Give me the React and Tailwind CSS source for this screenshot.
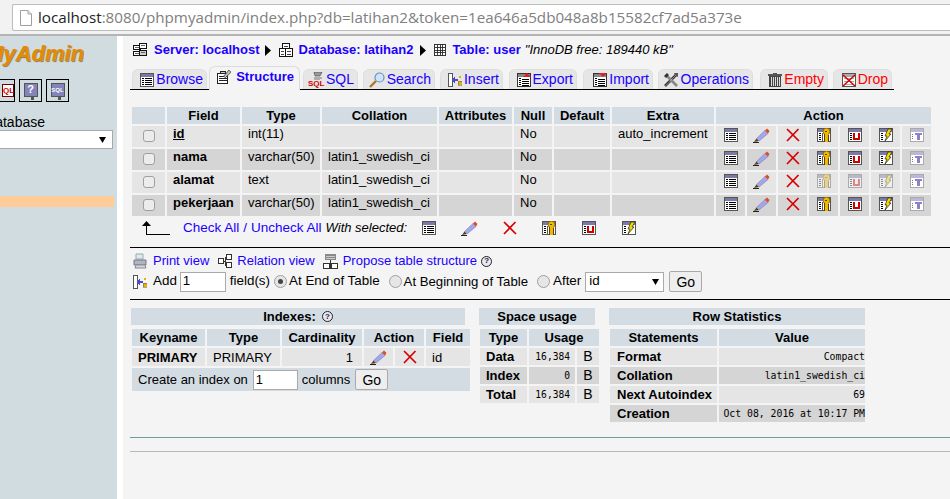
import React from 'react';

const link = 'text-[#1a00ff]';
const headCell = 'bg-[#d3dce3] font-bold text-center p-0 h-[17px] leading-[17px]';

const Svg = ({ children, size = 14, className = '' }) => (
  <svg width={size} height={size} viewBox="0 0 14 14" shapeRendering="crispEdges" className={`inline-block align-top shrink-0 ${className}`}>
    {children}
  </svg>
);

const Frame = ({ head = '#7a7aa8', border = '#555' }) => (
  <>
    <rect x="0.5" y="0.5" width="13" height="13" fill="#fff" stroke={border} />
    <rect x="1" y="1" width="12" height="3" fill={head} />
  </>
);

const Dots = () => (
  <>
    <rect x="2" y="5" width="2" height="1" fill="#000" />
    <rect x="2" y="7" width="2" height="1" fill="#000" />
    <rect x="2" y="9" width="2" height="1" fill="#000" />
    <rect x="2" y="11" width="2" height="1" fill="#000" />
  </>
);

const BrowseIcon = () => (
  <Svg>
    <Frame />
    <Dots />
    <rect x="5" y="5" width="7" height="1" fill="#000" />
    <rect x="5" y="7" width="7" height="1" fill="#000" />
    <rect x="5" y="9" width="7" height="1" fill="#000" />
    <rect x="5" y="11" width="7" height="1" fill="#000" />
  </Svg>
);

const PencilIcon = () => (
  <svg width="17" height="15" viewBox="0 0 17 15" className="inline-block align-top shrink-0">
    <path d="M0 14.5 H6" stroke="#222" strokeWidth="1" />
    <path d="M1 14 L3.5 10.5 L6 13 Z" fill="#5a4010" />
    <path d="M3.5 10.5 L12 2.5 L15 5.5 L6 13 Z" fill="#a4a8ea" stroke="#6a6a9a" strokeWidth="0.5" />
    <path d="M12 2.5 L14 0.5 L16.5 3 L15 5.5 Z" fill="#e04a20" />
  </svg>
);

const DropIcon = () => (
  <svg width="14" height="14" viewBox="0 0 14 14" className="inline-block align-top shrink-0">
    <path d="M1 1 L13 13 M12.5 1 L1 13" stroke="#d80000" strokeWidth="1.7" />
  </svg>
);

const KeyIcon = ({ dim }) => (
  <Svg className={dim ? 'opacity-40' : ''}>
    <Frame />
    <Dots />
    <rect x="5" y="5" width="1" height="8" fill="#555" />
    <circle cx="9.5" cy="3.5" r="3.4" fill="#f0b800" stroke="#5a4300" strokeWidth="0.6" shapeRendering="auto" />
    <rect x="8" y="3" width="2" height="1" fill="#5a4300" />
    <rect x="8" y="6" width="3" height="8" fill="#f0b800" />
    <rect x="7" y="6" width="1" height="8" fill="#5a4300" />
    <rect x="11" y="7" width="1" height="7" fill="#5a4300" />
  </Svg>
);

const UniqueIcon = ({ dim }) => (
  <Svg className={dim ? 'opacity-40' : ''}>
    <Frame />
    <Dots />
    <path d="M5 5 H7 V10 H10 V5 H12 V12 H5 Z" fill="#d00000" />
  </Svg>
);

const BoltIcon = ({ dim }) => (
  <Svg className={dim ? 'opacity-40' : ''}>
    <Frame />
    <Dots />
    <path d="M9 1 H13 L10 6 H12 L6 13 L8 8 H6 Z" fill="#f5d800" stroke="#222" strokeWidth="0.7" shapeRendering="auto" />
  </Svg>
);

const TextIcon = () => (
  <Svg>
    <rect x="0.5" y="0.5" width="13" height="13" fill="#fff" stroke="#aaa" />
    <rect x="1" y="1" width="12" height="3" fill="#b8b8d8" />
    <path d="M2 6h1v1H2zM2 8h1v1H2zM2 10h1v1H2z" fill="#777" />
    <path d="M5 5 H12 V7 H10 V12 H7 V7 H5 Z" fill="#9080c8" />
  </Svg>
);

const StructureIcon = () => (
  <Svg size={15}>
    <path d="M1 4 H11 V14 H1 Z" fill="#fff" stroke="#222" />
    <path d="M3 7h7M3 9h7M3 11h7" stroke="#222" />
    <path d="M4 2 H9 V4 H4 Z" fill="#ccc" stroke="#222" />
    <path d="M7 7 L12 1 L14 3 L9 8 Z" fill="#bbb" stroke="#222" strokeWidth="0.6" shapeRendering="auto" />
  </Svg>
);

const SqlIcon = () => (
  <span className="relative inline-block w-[16px] h-[15px] shrink-0">
    <svg width="16" height="9" viewBox="0 0 16 9" className="absolute right-0 top-0">
      <path d="M6 0 H14 L12 4 H7 Z" fill="#999" stroke="#444" strokeWidth="0.6" />
      <path d="M7 5v3M9 5v3M11 5v3M13 5v2" stroke="#777" />
    </svg>
    <span className="absolute left-0 bottom-[-1px] text-[8px] leading-[8px] font-bold text-[#d00000]">SQL</span>
  </span>
);

const SearchIcon = () => (
  <svg width="16" height="16" viewBox="0 0 16 16" className="inline-block shrink-0">
    <path d="M1 15 L7 9" stroke="#b07820" strokeWidth="2.4" />
    <circle cx="10.5" cy="5.5" r="4.5" fill="#cfe4fb" stroke="#6a90c0" strokeWidth="1.2" />
  </svg>
);

const InsertIcon = () => (
  <Svg>
    <rect x="0.5" y="0.5" width="4" height="13" fill="#fff" stroke="#555" />
    <path d="M3 7 L7 4 V6 H10 V8 H7 V10 Z" fill="#4a4ad0" />
    <rect x="11" y="3" width="2" height="2" fill="#e8b000" />
    <rect x="10" y="8" width="4" height="4" fill="#e8b000" stroke="#555" strokeWidth="0.5" />
  </Svg>
);

const ExportIcon = () => (
  <Svg>
    <Frame head="#888" border="#333" />
    <Dots />
    <path d="M5 6h7M5 8h7M5 10h7M5 12h7" stroke="#000" />
    <path d="M10 0 L14 4 H6 Z" fill="#e02020" shapeRendering="auto" />
  </Svg>
);

const ImportIcon = () => (
  <Svg>
    <Frame head="#888" border="#333" />
    <Dots />
    <path d="M5 6h7M5 8h7M5 10h7M5 12h7" stroke="#000" />
    <path d="M6 0 H14 L10 4 Z" fill="#e02020" shapeRendering="auto" />
  </Svg>
);

const OperationsIcon = () => (
  <svg width="16" height="16" viewBox="0 0 16 16" className="inline-block shrink-0">
    <path d="M2 14 L13 3" stroke="#333" strokeWidth="2.6" />
    <path d="M3 3 L14 14" stroke="#888" strokeWidth="2.6" />
    <path d="M1 4 L4 1 L6 3 L3 6 Z" fill="#333" />
    <path d="M11 1 H15 V5 L13 4 L12 3 Z" fill="#555" />
    <path d="M2.5 14 L13 3" stroke="#ccc" strokeWidth="0.6" />
  </svg>
);

const EmptyIcon = () => (
  <Svg>
    <rect x="0" y="1" width="14" height="2" fill="#555" />
    <rect x="5" y="0" width="4" height="1" fill="#555" />
    <rect x="1" y="3" width="12" height="11" fill="#444" />
    <path d="M3 4v9M5 4v9M7 4v9M9 4v9M11 4v9" stroke="#ddd" />
  </Svg>
);

const DropTabIcon = () => (
  <Svg>
    <Frame head="#aaa" border="#555" />
    <path d="M2 5h10M2 8h10M2 11h10" stroke="#aaa" />
    <path d="M1 2 L13 13 M13 2 L1 13" stroke="#d80000" strokeWidth="1.6" shapeRendering="auto" />
  </Svg>
);

const ServerIcon = () => (
  <Svg>
    <rect x="0.5" y="2.5" width="7" height="4" fill="#fff" stroke="#111" />
    <rect x="6.5" y="0.5" width="7" height="5" fill="#fff" stroke="#111" />
    <rect x="0.5" y="8.5" width="7" height="4" fill="#fff" stroke="#111" />
    <rect x="6.5" y="7.5" width="7" height="5" fill="#ccc" stroke="#111" />
    <path d="M2 4h4M2 10h4M8 2h4M8 9h4" stroke="#666" />
  </Svg>
);

const DatabaseIcon = () => (
  <Svg>
    <rect x="3.5" y="0.5" width="7" height="5" fill="#fff" stroke="#111" />
    <rect x="0.5" y="5.5" width="6" height="8" fill="#fff" stroke="#111" />
    <rect x="6.5" y="5.5" width="7" height="8" fill="#fff" stroke="#111" />
    <path d="M2 8h3M2 11h3M8 8h4M8 11h4M5 3h4" stroke="#444" />
  </Svg>
);

const TableSmallIcon = () => (
  <Svg size={12}>
    <rect x="0.5" y="0.5" width="13" height="13" fill="#fff" stroke="#111" />
    <path d="M1 4h12M1 7h12M1 10h12M4 1v12M7 1v12M10 1v12" stroke="#222" />
  </Svg>
);

const Crumb = ({ className = '' }) => (
  <svg width="8" height="11" viewBox="0 0 8 11" className={`shrink-0 ${className}`}>
    <path d="M1 0 L7 5.5 L1 11 Z" fill="#000" />
  </svg>
);

const DownArrow = () => (
  <svg width="7" height="6" viewBox="0 0 7 6" className="shrink-0">
    <path d="M0 0 H7 L3.5 6 Z" fill="#000" />
  </svg>
);

const HelpIcon = () => (
  <span className="inline-flex items-center justify-center w-[11px] h-[11px] rounded-full border border-[#222] bg-[#e8e8f4] text-[8px] leading-none font-bold text-[#222]">?</span>
);

const PrintIcon = () => (
  <svg width="15" height="16" viewBox="0 0 15 16" className="inline-block shrink-0">
    <path d="M3 1 H10 V6 H3 Z" fill="#dfe8f5" stroke="#9aa" />
    <path d="M1 7 H13 V12 H1 Z" fill="#aeb6c0" stroke="#778" />
    <path d="M3 12 H12 L13 15 H2 Z" fill="#d8d8d8" stroke="#889" />
  </svg>
);

const RelationIcon = () => (
  <Svg>
    <rect x="8.5" y="0.5" width="5" height="5" fill="#fff" stroke="#333" />
    <rect x="0.5" y="4.5" width="5" height="5" fill="#fff" stroke="#333" />
    <rect x="8.5" y="8.5" width="5" height="5" fill="#fff" stroke="#333" />
    <path d="M6 7h2M7 3v9M7 3h1M7 11h1" stroke="#333" />
  </Svg>
);

const ProposeIcon = () => (
  <Svg size={15}>
    <rect x="2" y="0" width="10" height="6" fill="#888" />
    <path d="M3 2h8M3 4h8" stroke="#ccc" />
    <rect x="0.5" y="8.5" width="6" height="5" fill="#fff" stroke="#333" />
    <rect x="7.5" y="8.5" width="6" height="5" fill="#fff" stroke="#333" />
    <path d="M7 6v2" stroke="#333" />
  </Svg>
);

const ArrowUpRight = () => (
  <svg width="29" height="15" viewBox="0 0 29 15" className="shrink-0">
    <path d="M4 13.5 H28" stroke="#000" />
    <path d="M4.5 13.5 V4" stroke="#000" />
    <path d="M0 5 L4.5 0 L9 5 Z" fill="#000" />
  </svg>
);

const Checkbox = () => (
  <input type="checkbox" className="appearance-none block mx-auto mt-[4px] w-[12px] h-[12px] rounded-[3px] border border-[#a0a0a0] bg-[#ececec]" />
);

const Radio = ({ checked }) => (
  <span className="inline-flex items-center justify-center w-[13px] h-[13px] rounded-full border border-[#a0a0a0] bg-[#e6e6e6] shrink-0">
    {checked && <span className="w-[5px] h-[5px] rounded-full bg-[#444]" />}
  </span>
);

const GoButton = () => (
  <button className="h-[21px] w-[33px] bg-[#eeeeee] border border-[#aaa] rounded-[2px] text-[14px] text-black leading-none">Go</button>
);

const Bubble = ({ children, className = '' }) => (
  <span className="relative w-[14px] h-[14px] mb-[2px] bg-[#8484b8] border border-[#555] flex items-center justify-center">
    <span className={`text-white font-bold leading-none ${className}`}>{children}</span>
    <span className="absolute left-[6px] top-[12px] w-[3px] h-[4px] bg-[#555]" />
  </span>
);

const tabs = [
  { label: 'Browse', icon: <BrowseIcon />, w: 'w-[75px]', ml: 'ml-[2px]' },
  { label: 'Structure', icon: <StructureIcon />, w: 'w-[91px]', ml: 'ml-[2px]', active: true },
  { label: 'SQL', icon: <SqlIcon />, w: 'w-[55px]', ml: 'ml-[3px]' },
  { label: 'Search', icon: <SearchIcon />, w: 'w-[72px]', ml: 'ml-[5px]' },
  { label: 'Insert', icon: <InsertIcon />, w: 'w-[63px]', ml: 'ml-[5px]' },
  { label: 'Export', icon: <ExportIcon />, w: 'w-[68px]', ml: 'ml-[6px]' },
  { label: 'Import', icon: <ImportIcon />, w: 'w-[70px]', ml: 'ml-[6px]' },
  { label: 'Operations', icon: <OperationsIcon />, w: 'w-[95px]', ml: 'ml-[5px]' },
  { label: 'Empty', icon: <EmptyIcon />, w: 'w-[68px]', ml: 'ml-[7px]', red: true },
  { label: 'Drop', icon: <DropTabIcon />, w: 'w-[59px]', ml: 'ml-[5px]', red: true },
];

const fields = [
  { name: 'id', type: 'int(11)', collation: '', extra: 'auto_increment', primary: true },
  { name: 'nama', type: 'varchar(50)', collation: 'latin1_swedish_ci', extra: '' },
  { name: 'alamat', type: 'text', collation: 'latin1_swedish_ci', extra: '', dimmed: true },
  { name: 'pekerjaan', type: 'varchar(50)', collation: 'latin1_swedish_ci', extra: '' },
];

const spaceRows = [
  ['Data', '16,384'],
  ['Index', '0'],
  ['Total', '16,384'],
];

const statRows = [
  ['Format', 'Compact'],
  ['Collation', 'latin1_swedish_ci'],
  ['Next Autoindex', '69'],
  ['Creation', 'Oct 08, 2016 at 10:17 PM'],
];

const mono = "font-['DejaVu_Sans_Mono','Liberation_Mono',monospace]";

const App = () => {
  return (
    <div className="w-[950px] h-[499px] overflow-hidden flex flex-col bg-white font-['Liberation_Sans',Arial,sans-serif] text-[13px] text-black">
      {/* address bar */}
      <div className="h-[36px] shrink-0 bg-[#f2f2f2] border-b-2 border-[#b4b4b4] pl-[12px] pt-[4px]">
        <div className="h-[27px] bg-white border border-[#bdbdbd] border-r-0 rounded-l-[2px] flex items-center pl-[6px] gap-[5px]">
          <svg width="14" height="16" viewBox="0 0 14 16" className="shrink-0">
            <path d="M1.5 0.5 H9 L12.5 4 V15.5 H1.5 Z" fill="#fff" stroke="#a0a0a0" />
            <path d="M9 0.5 V4 H12.5" fill="#e8e8e8" stroke="#a0a0a0" />
          </svg>
          <span className="font-['Open_Sans','Noto_Sans',sans-serif] text-[15.2px] leading-[22px] mb-[1px] whitespace-nowrap text-[#808080]">
            <span className="text-[#222]">localhost</span>:8080/phpmyadmin/index.php?db=latihan2&amp;token=1ea646a5db048a8b15582cf7ad5a373e
          </span>
        </div>
      </div>

      <div className="flex-1 flex min-h-0">
        {/* sidebar, clipped on the left */}
        <aside className="w-[117px] shrink-0 bg-[#d0dce0] flex flex-col overflow-hidden">
          <div className="w-[84px] h-[32px] mt-[2px] flex justify-end overflow-hidden">
            <span className="font-bold italic text-[22px] leading-[32px] text-[#e88a00] whitespace-nowrap [text-shadow:1px_1px_1px_#8a7a50]">phpMyAdmin</span>
          </div>
          <div className="w-[69px] mt-[9px] flex justify-end gap-[4px]">
            <div className="w-[23px] h-[23px] border border-black flex items-center justify-end shrink-0 overflow-hidden">
              <span className="w-[12px] h-[13px] bg-white border border-[#700] text-[8px] leading-[12px] font-bold text-[#d00000]">QL</span>
            </div>
            <div className="w-[23px] h-[23px] border border-black flex items-center justify-center shrink-0">
              <Bubble className="text-[11px]">?</Bubble>
            </div>
            <div className="w-[23px] h-[23px] border border-black flex items-center justify-center shrink-0">
              <Bubble className="text-[6px]">SQL</Bubble>
            </div>
          </div>
          <div className="w-[45px] h-[16px] mt-[12px] flex justify-end overflow-hidden">
            <span className="text-[14px] leading-[16px] whitespace-nowrap">Database</span>
          </div>
          <div className="w-[113px] h-[19px] bg-white border border-[#a8a8a8] border-l-0 flex items-center justify-end pr-[6px]">
            <DownArrow />
          </div>
          <div className="w-[114px] h-[11px] mt-[47px] bg-[#ffcc99]" />
        </aside>
        <div className="w-[6px] shrink-0 bg-white" />

        <main className="flex-1 bg-[#f4f4f4] pl-[7px] min-w-0 overflow-hidden">
          {/* breadcrumb */}
          <div className="flex items-center h-[16px] mt-[6px] ml-[3px] font-bold whitespace-nowrap">
            <ServerIcon />
            <span className={`${link} ml-[7px]`}>Server: localhost</span>
            <Crumb className="ml-[4px] mr-[7px]" />
            <DatabaseIcon />
            <span className={`${link} ml-[6px]`}>Database: latihan2</span>
            <Crumb className="ml-[6px] mr-[7px]" />
            <TableSmallIcon />
            <span className={`${link} ml-[6px]`}>Table: user</span>
            <span className="font-normal italic ml-[4px]">"InnoDB free: 189440 kB"</span>
          </div>

          {/* tabs */}
          <div className="flex items-end mt-[8px] h-[24px] w-[764px] border-b border-black text-[14px]">
            {tabs.map((t) => (
              <div
                key={t.label}
                className={`${t.w} ${t.ml} shrink-0 flex items-center justify-end whitespace-nowrap border border-b-0 rounded-t-[6px] ${
                  t.active
                    ? 'h-[24px] mb-[-1px] pb-[4px] pr-[5px] bg-[#f4f4f4] border-[#dcdcdc] font-bold text-[13px] gap-[5px]'
                    : 'h-[20px] pr-[3px] gap-[2px] bg-[#e6e6e6] border-[#dedede]'
                } ${t.red ? 'text-[#ff0000]' : link}`}
              >
                {t.icon}
                <span>{t.label}</span>
              </div>
            ))}
          </div>

          {/* structure table */}
          <table className="table-fixed border-separate border-spacing-[2px] mt-[15px] w-[803px]">
            <colgroup>
              <col className="w-[33px]" />
              <col className="w-[73px]" />
              <col className="w-[78px]" />
              <col className="w-[115px]" />
              <col className="w-[73px]" />
              <col className="w-[38px]" />
              <col className="w-[56px]" />
              <col className="w-[102px]" />
              {[0, 1, 2, 3, 4, 5, 6].map((i) => (
                <col key={i} className="w-[29px]" />
              ))}
            </colgroup>
            <thead>
              <tr>
                <th className={headCell} />
                <th className={headCell}>Field</th>
                <th className={headCell}>Type</th>
                <th className={headCell}>Collation</th>
                <th className={headCell}>Attributes</th>
                <th className={headCell}>Null</th>
                <th className={headCell}>Default</th>
                <th className={headCell}>Extra</th>
                <th className={headCell} colSpan={7}>Action</th>
              </tr>
            </thead>
            <tbody>
              {fields.map((f, i) => {
                const bg = i % 2 === 0 ? 'bg-[#e5e5e5]' : 'bg-[#d5d5d5]';
                const cell = `${bg} h-[21px] p-0 pl-[6px] align-top leading-[16px] whitespace-nowrap`;
                const icon = `${bg} h-[21px] p-0 pt-[2px] text-center align-top leading-none`;
                return (
                  <tr key={f.name}>
                    <td className={`${bg} p-0 align-top`}><Checkbox /></td>
                    <td className={`${cell} font-bold`}>
                      <span className={f.primary ? 'underline' : ''}>{f.name}</span>
                    </td>
                    <td className={cell}>{f.type}</td>
                    <td className={cell}>{f.collation}</td>
                    <td className={cell} />
                    <td className={cell}>No</td>
                    <td className={cell} />
                    <td className={cell}>{f.extra}</td>
                    <td className={icon}><BrowseIcon /></td>
                    <td className={icon}><PencilIcon /></td>
                    <td className={icon}><DropIcon /></td>
                    <td className={icon}><KeyIcon dim={f.dimmed} /></td>
                    <td className={icon}><UniqueIcon dim={f.dimmed} /></td>
                    <td className={icon}><BoltIcon dim={f.dimmed} /></td>
                    <td className={icon}><TextIcon /></td>
                  </tr>
                );
              })}
            </tbody>
          </table>

          {/* with selected */}
          <div className="flex items-center h-[20px] ml-[12px] text-[13.5px] whitespace-nowrap">
            <ArrowUpRight />
            <span className={`${link} ml-[12px]`}>Check All</span>
            <span className={`${link} mx-[4px]`}>/</span>
            <span className={link}>Uncheck All</span>
            <span className="italic ml-[4px] text-[13px]">With selected:</span>
            <span className="ml-[15px] flex items-center gap-[25px]">
              <BrowseIcon />
              <PencilIcon />
              <DropIcon />
              <KeyIcon />
              <span className="ml-[1px] flex"><UniqueIcon /></span>
              <span className="ml-[1px] flex"><BoltIcon /></span>
            </span>
          </div>

          {/* extra actions */}
          <div className="mt-[9px] border-t border-b border-black h-[53px] whitespace-nowrap">
            <div className="flex items-center h-[16px] mt-[5px] ml-[3px]">
              <PrintIcon />
              <span className={`${link} ml-[5px]`}>Print view</span>
              <span className="ml-[9px] flex"><RelationIcon /></span>
              <span className={`${link} ml-[5px]`}>Relation view</span>
              <span className="ml-[8px] flex"><ProposeIcon /></span>
              <span className={`${link} ml-[5px]`}>Propose table structure</span>
              <span className="ml-[4px] flex"><HelpIcon /></span>
            </div>
            <div className="flex items-center h-[21px] mt-[2px] ml-[3px] text-[13.4px]">
              <InsertIcon />
              <span className="ml-[6px]">Add</span>
              <input readOnly value="1" className="ml-[3px] w-[46px] h-[20px] bg-white border border-[#aaa] pl-[2px]" />
              <span className="ml-[4px]">field(s)</span>
              <span className="ml-[4px] flex"><Radio checked /></span>
              <span className="ml-[2px]">At End of Table</span>
              <span className="ml-[9px] flex"><Radio /></span>
              <span className="ml-[2px] text-[13.2px]">At Beginning of Table</span>
              <span className="ml-[9px] flex"><Radio /></span>
              <span className="ml-[3px]">After</span>
              <div className="ml-[4px] w-[79px] h-[20px] bg-white border border-[#aaa] flex items-center justify-between pl-[3px] pr-[4px]">
                <span>id</span>
                <DownArrow />
              </div>
              <span className="ml-[5px] flex"><GoButton /></span>
            </div>
          </div>

          {/* bottom tables */}
          <div className="flex items-start mt-[8px] leading-[17px]">
            <div className="w-[349px] shrink-0">
              <div className="ml-[1px] w-[334px] h-[17px] bg-[#d3dce3] font-bold flex items-center justify-center gap-[6px]">
                Indexes: <HelpIcon />
              </div>
              <table className="table-fixed border-separate border-spacing-[2px] w-[342px] mt-[2px]">
                <colgroup>
                  <col className="w-[73px]" />
                  <col className="w-[73px]" />
                  <col className="w-[80px]" />
                  <col className="w-[29px]" />
                  <col className="w-[29px]" />
                  <col className="w-[44px]" />
                </colgroup>
                <thead>
                  <tr>
                    <th className={headCell}>Keyname</th>
                    <th className={headCell}>Type</th>
                    <th className={headCell}>Cardinality</th>
                    <th className={headCell} colSpan={2}>Action</th>
                    <th className={headCell}>Field</th>
                  </tr>
                </thead>
                <tbody>
                  <tr>
                    <th className="bg-[#e5e5e5] h-[18px] p-0 pl-[6px] text-left">PRIMARY</th>
                    <td className="bg-[#e5e5e5] p-0 pl-[6px]">PRIMARY</td>
                    <td className="bg-[#e5e5e5] p-0 pr-[9px] text-right">1</td>
                    <td className="bg-[#e5e5e5] p-0 pt-[2px] align-top text-center leading-none"><PencilIcon /></td>
                    <td className="bg-[#e5e5e5] p-0 pt-[2px] align-top text-center leading-none"><DropIcon /></td>
                    <td className="bg-[#e5e5e5] p-0 pl-[6px]">id</td>
                  </tr>
                  <tr>
                    <td colSpan={6} className="bg-[#d3dce3] h-[23px] p-0 pl-[6px]">
                      <div className="flex items-center">
                        Create an index on
                        <input readOnly value="1" className="ml-[5px] w-[45px] h-[20px] bg-white border border-[#aaa] pl-[2px]" />
                        <span className="ml-[4px]">columns</span>
                        <span className="ml-[5px] flex"><GoButton /></span>
                      </div>
                    </td>
                  </tr>
                </tbody>
              </table>
            </div>

            <div className="w-[130px] shrink-0">
              <div className="w-[116px] h-[17px] bg-[#d3dce3] font-bold text-center">Space usage</div>
              <table className="table-fixed border-separate border-spacing-[2px] w-[123px] ml-[-1px] mt-[2px]">
                <colgroup>
                  <col className="w-[47px]" />
                  <col className="w-[46px]" />
                  <col className="w-[22px]" />
                </colgroup>
                <thead>
                  <tr>
                    <th className={headCell}>Type</th>
                    <th className={headCell} colSpan={2}>Usage</th>
                  </tr>
                </thead>
                <tbody>
                  {spaceRows.map(([label, value], i) => {
                    const bg = i % 2 === 0 ? 'bg-[#e5e5e5]' : 'bg-[#d5d5d5]';
                    return (
                      <tr key={label}>
                        <th className={`${bg} h-[17px] p-0 pl-[6px] text-left font-bold`}>{label}</th>
                        <td className={`${bg} p-0 pr-[5px] text-right text-[9.6px] ${mono}`}>{value}</td>
                        <td className={`${bg} p-0 text-center text-[14px]`}>B</td>
                      </tr>
                    );
                  })}
                </tbody>
              </table>
            </div>

            <div className="w-[262px] shrink-0">
              <div className="w-[256px] h-[17px] bg-[#d3dce3] font-bold text-center">Row Statistics</div>
              <table className="table-fixed border-separate border-spacing-[2px] w-[259px] ml-[-1px] mt-[2px]">
                <colgroup>
                  <col className="w-[107px]" />
                  <col className="w-[146px]" />
                </colgroup>
                <thead>
                  <tr>
                    <th className={headCell}>Statements</th>
                    <th className={headCell}>Value</th>
                  </tr>
                </thead>
                <tbody>
                  {statRows.map(([label, value], i) => {
                    const bg = i % 2 === 0 ? 'bg-[#e5e5e5]' : 'bg-[#d5d5d5]';
                    return (
                      <tr key={label}>
                        <th className={`${bg} h-[17px] p-0 pl-[7px] text-left font-bold`}>{label}</th>
                        <td className={`${bg} p-0 text-right text-[9.8px] whitespace-nowrap ${mono}`}>{value}</td>
                      </tr>
                    );
                  })}
                </tbody>
              </table>
            </div>
          </div>

          {/* page footer rules */}
          <div className="mt-[13px] h-[15px] border-t border-b border-t-[#6f9d9d] border-b-[#b8b8b8]" />
        </main>
      </div>
    </div>
  );
};

export default App;
